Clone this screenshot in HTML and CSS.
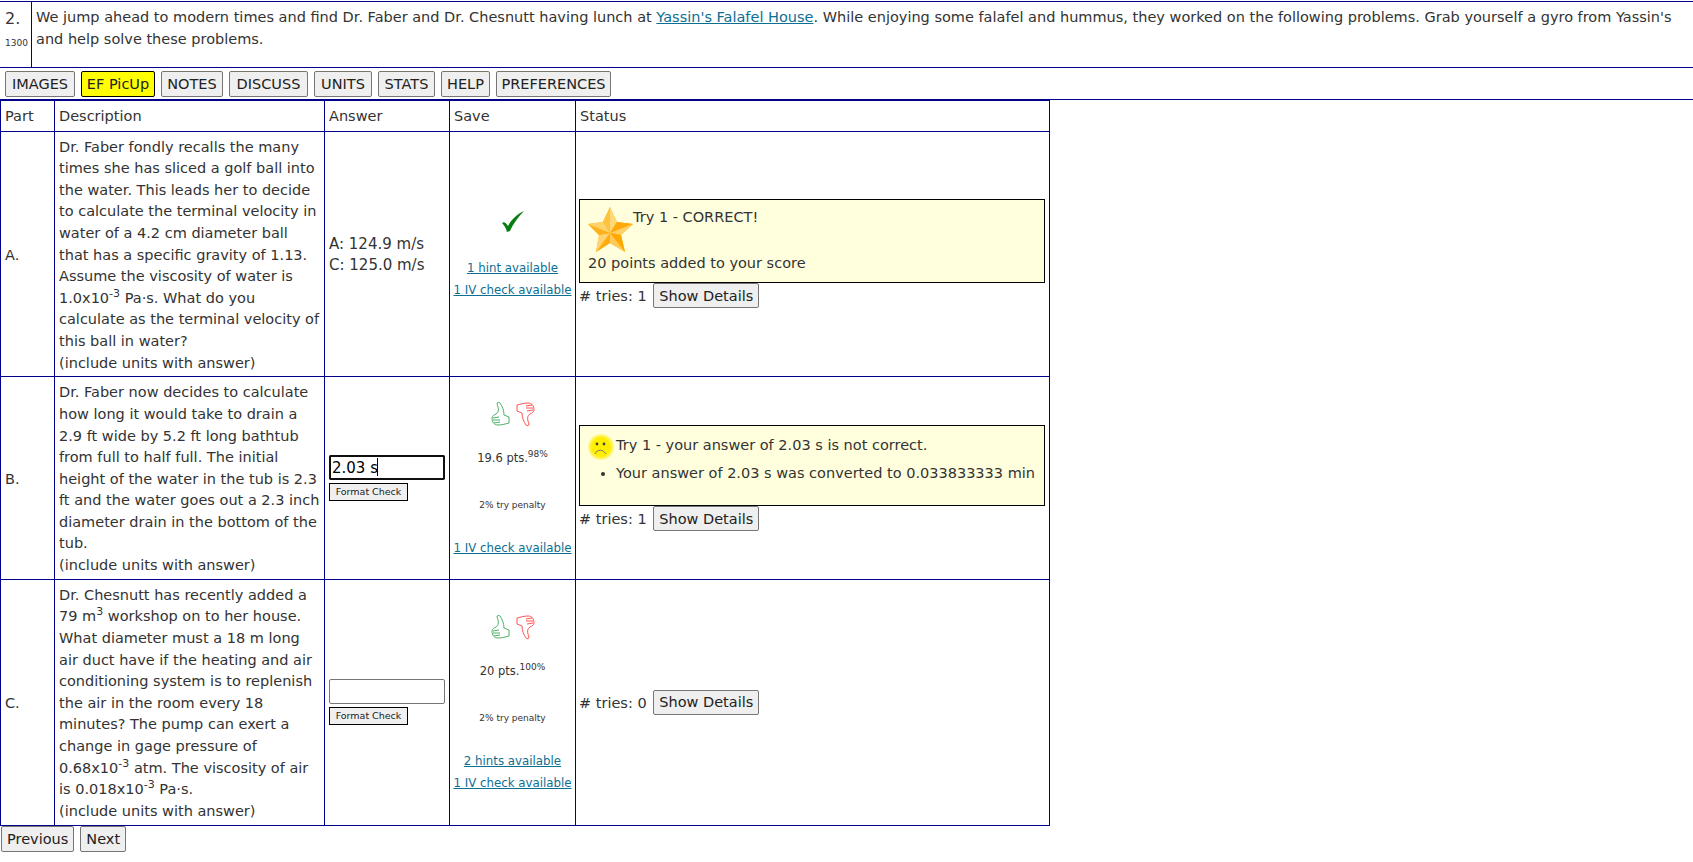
FILE: index.html
```html
<!DOCTYPE html>
<html lang="en">
<head>
<meta charset="utf-8">
<title>Problem 2</title>
<link rel="stylesheet" href="styles.css">
</head>
<body>
<div class="intro">
  <div class="num"><div class="num-big">2.</div><div class="num-small">1300</div></div>
  <div class="intro-text">We jump ahead to modern times and find Dr. Faber and Dr. Chesnutt having lunch at <a href="#">Yassin's Falafel House</a>. While enjoying some falafel and hummus, they worked on the following problems. Grab yourself a gyro from Yassin's<br>and help solve these problems.</div>
</div>
<div class="toolbar">
  <button class="btn">IMAGES</button>
  <button class="btn btn-on">EF PicUp</button>
  <button class="btn">NOTES</button>
  <button class="btn">DISCUSS</button>
  <button class="btn">UNITS</button>
  <button class="btn">STATS</button>
  <button class="btn">HELP</button>
  <button class="btn">PREFERENCES</button>
</div>
<table class="parts">
  <colgroup><col class="c1"><col class="c2"><col class="c3"><col class="c4"><col class="c5"></colgroup>
  <tr class="head"><td>Part</td><td>Description</td><td>Answer</td><td>Save</td><td>Status</td></tr>
  <tr>
    <td>A.</td>
    <td class="desc">Dr. Faber fondly recalls the many<br>times she has sliced a golf ball into<br>the water. This leads her to decide<br>to calculate the terminal velocity in<br>water of a 4.2 cm diameter ball<br>that has a specific gravity of 1.13.<br>Assume the viscosity of water is<br>1.0x10<sup>-3</sup> Pa·s. What do you<br>calculate as the terminal velocity of<br>this ball in water?<br>(include units with answer)</td>
    <td class="ans">A: 124.9 m/s<br>C: 125.0 m/s</td>
    <td class="save">
      <div class="stack">
        <svg class="check" viewBox="0 0 24 21" width="24" height="21"><path d="M1 12 C3 10 5 12 7 15 C10 9 16 3 23 0 C17 6 12 13 9 20 L6 21 C5 17 3 14 1 12Z" fill="#0a7d12"/></svg>
        <a class="lnk" href="#">1 hint available</a>
        <a class="lnk" href="#">1 IV check available</a>
      </div>
    </td>
    <td class="status">
      <div class="box box-a">
        <svg class="star" viewBox="0 0 45 46" width="45" height="46"><polygon points="22,0 29,15 45,17 33,28 37,45 22,36 8,45 11,28 0,17 15,15" fill="#ffb30f"/><polygon points="22,0 15,15 22,26" fill="#ffc23c"/><polygon points="22,0 29,15 22,26" fill="#ffd878"/><polygon points="45,17 29,15 22,26" fill="#ffa90a"/><polygon points="45,17 33,28 22,26" fill="#ffd067"/><polygon points="37,45 33,28 22,26" fill="#ffa800"/><polygon points="37,45 22,36 22,26" fill="#ffc95a"/><polygon points="8,45 22,36 22,26" fill="#ffad0c"/><polygon points="8,45 11,28 22,26" fill="#ffd373"/><polygon points="0,17 11,28 22,26" fill="#ffb01a"/><polygon points="0,17 15,15 22,26" fill="#ffd36b"/></svg>
        <div class="box-line1">Try 1 - CORRECT!</div>
        <div class="box-line2">20 points added to your score</div>
      </div>
      <div class="tries"># tries: 1 <button class="btn">Show Details</button></div>
    </td>
  </tr>
  <tr>
    <td>B.</td>
    <td class="desc">Dr. Faber now decides to calculate<br>how long it would take to drain a<br>2.9 ft wide by 5.2 ft long bathtub<br>from full to half full. The initial<br>height of the water in the tub is 2.3<br>ft and the water goes out a 2.3 inch<br>diameter drain in the bottom of the<br>tub.<br>(include units with answer)</td>
    <td class="ans ans-input">
      <div class="input-wrap"><input class="field field-focus" value="2.03 s" readonly><span class="caret"></span></div>
      <button class="fmt">Format Check</button>
    </td>
    <td class="save">
      <div class="stack">
        <svg class="thumbs" viewBox="0 0 44 26" width="44" height="26"><g fill="#fff" stroke-width="0.9"><path class="tu" d="M7 24 C3 24 1 21 1 17 C1 15 3 14 5 13 C8 11 8 8 6 3 C6 1 8 1 9 2 C11 5 13 9 13 14 L18 16 L18 22 C14 23 11 24 7 24Z M2 17 L8 16 M2 19 L9 19 M3 22 L9 21"/><path class="td" d="M7 24 C3 24 1 21 1 17 C1 15 3 14 5 13 C8 11 8 8 6 3 C6 1 8 1 9 2 C11 5 13 9 13 14 L18 16 L18 22 C14 23 11 24 7 24Z M2 17 L8 16 M2 19 L9 19 M3 22 L9 21" transform="rotate(180 22 13)"/></g></svg>
        <div class="pts">19.6 pts.<sup>98%</sup></div>
        <div class="pen">2% try penalty</div>
        <a class="lnk lnk-after" href="#">1 IV check available</a>
      </div>
    </td>
    <td class="status">
      <div class="box box-b">
        <svg class="sad" viewBox="0 0 26 26" width="26" height="26"><defs><radialGradient id="sadg" cx="50%" cy="50%" r="50%"><stop offset="70%" stop-color="#ffee00"/><stop offset="100%" stop-color="#fff8a0"/></radialGradient></defs><circle cx="13" cy="13" r="13" fill="url(#sadg)"/><circle cx="9" cy="10" r="1.4" fill="#444"/><circle cx="16" cy="10" r="1.4" fill="#444"/><path d="M7 20 C9 15 15 15 18 20" fill="none" stroke="#777" stroke-width="1"/></svg>
        <div class="box-line1 box-line1-b">Try 1 - your answer of 2.03 s is not correct.</div>
        <ul class="notes"><li>Your answer of 2.03 s was converted to 0.033833333 min</li></ul>
      </div>
      <div class="tries"># tries: 1 <button class="btn">Show Details</button></div>
    </td>
  </tr>
  <tr>
    <td>C.</td>
    <td class="desc">Dr. Chesnutt has recently added a<br>79 m<sup>3</sup> workshop on to her house.<br>What diameter must a 18 m long<br>air duct have if the heating and air<br>conditioning system is to replenish<br>the air in the room every 18<br>minutes? The pump can exert a<br>change in gage pressure of<br>0.68x10<sup>-3</sup> atm. The viscosity of air<br>is 0.018x10<sup>-3</sup> Pa·s.<br>(include units with answer)</td>
    <td class="ans ans-input">
      <div class="input-wrap"><input class="field" value="" readonly></div>
      <button class="fmt">Format Check</button>
    </td>
    <td class="save">
      <div class="stack">
        <svg class="thumbs" viewBox="0 0 44 26" width="44" height="26"><g fill="#fff" stroke-width="0.9"><path class="tu" d="M7 24 C3 24 1 21 1 17 C1 15 3 14 5 13 C8 11 8 8 6 3 C6 1 8 1 9 2 C11 5 13 9 13 14 L18 16 L18 22 C14 23 11 24 7 24Z M2 17 L8 16 M2 19 L9 19 M3 22 L9 21"/><path class="td" d="M7 24 C3 24 1 21 1 17 C1 15 3 14 5 13 C8 11 8 8 6 3 C6 1 8 1 9 2 C11 5 13 9 13 14 L18 16 L18 22 C14 23 11 24 7 24Z M2 17 L8 16 M2 19 L9 19 M3 22 L9 21" transform="rotate(180 22 13)"/></g></svg>
        <div class="pts">20 pts.<sup>100%</sup></div>
        <div class="pen">2% try penalty</div>
        <a class="lnk lnk-after" href="#">2 hints available</a>
        <a class="lnk" href="#">1 IV check available</a>
      </div>
    </td>
    <td class="status">
      <div class="tries"># tries: 0 <button class="btn">Show Details</button></div>
    </td>
  </tr>
</table>
<div class="pager">
  <button class="btn">Previous</button>
  <button class="btn">Next</button>
</div>
</body>
</html>
```

FILE: styles.css
```css
html, body { margin: 0; padding: 0; background: #fff; }
body {
  font-family: "DejaVu Sans", Verdana, sans-serif;
  font-size: 14.5px;
  line-height: 21.6px;
  color: #333;
}
a { color: #0d6f92; }
.intro {
  display: flex;
  margin-top: 1px;
  height: 65px;
  border-top: 1px solid #00008b;
  border-bottom: 1px solid #00008b;
}
.num {
  padding-left: 5px;
  width: 26px;
  flex: none;
  border-right: 1px solid #00008b;
  border-left: 1px solid #00008b;
  margin-left: -1px;
}
.num-big { font-size: 16px; line-height: 20px; margin-top: 7px; }
.num-small { font-size: 9px; line-height: 12px; margin-top: 8px; }
.intro-text { padding: 5px 0 0 4px; white-space: nowrap; }
.toolbar {
  display: flex;
  gap: 6px;
  height: 32px;
  box-sizing: border-box;
  padding: 3px 0 0 5px;
  border-bottom: 1px solid #00008b;
}
.btn {
  font-family: inherit;
  font-size: 14.5px;
  line-height: 20px;
  height: 26px;
  padding: 0 5px;
  margin: 0;
  background: #efefef;
  color: #222;
  border: 1px solid #767676;
  border-radius: 2px;
}
.toolbar .btn { padding: 0; }
.toolbar .btn:nth-child(1) { width: 70px; }
.toolbar .btn:nth-child(2) { width: 74px; }
.toolbar .btn:nth-child(3) { width: 62px; }
.toolbar .btn:nth-child(4) { width: 79px; }
.toolbar .btn:nth-child(5) { width: 58px; }
.toolbar .btn:nth-child(6) { width: 57px; }
.toolbar .btn:nth-child(7) { width: 49px; }
.toolbar .btn:nth-child(8) { width: 115px; }
.btn-on { background: #ffff00; border-color: #000; }
.parts {
  border-collapse: collapse;
  table-layout: fixed;
  width: 1049px;
  border: 1px solid #00008b;
}
.c1 { width: 54px; }
.c2 { width: 270px; }
.c3 { width: 125px; }
.c4 { width: 126px; }
.c5 { width: 474px; }
.parts td {
  border: 1px solid #00008b;
  padding: 5px 4px 2.2px;
  vertical-align: middle;
  white-space: nowrap;
}
.parts .head td { height: 21px; padding: 5px 4px 3px; }
.parts sup { font-size: 11px; line-height: 0; }
.ans { font-size: 15px; }
.parts .ans-input { padding-top: 5px; padding-bottom: 4.5px; }
.parts .save { padding-top: 7px; }
.parts .status { padding: 5px 4px 4.5px 3px; }
.stack { display: flex; flex-direction: column; align-items: center; }
.check { margin-bottom: 25px; }
.lnk { font-size: 11.8px; line-height: 22.5px; }
.lnk-after { margin-top: 25px; }
.thumbs { margin-bottom: 20px; }
.tu { stroke: #3aa655; }
.td { stroke: #ff4040; }
.parts .pts { font-size: 11.5px; line-height: 22px; }
.parts .pts sup { font-size: 9px; }
.pen { font-size: 9px; line-height: 14px; margin-top: 28.5px; }
.box {
  border: 1px solid #000;
  background: #ffffdd;
  padding: 7px 8px;
  box-sizing: border-box;
  width: 466px;
}
.box-a { height: 84px; }
.box-b { height: 81px; }
.star { float: left; }
.sad { float: left; margin: 1px 2px 0 0; }
.box-line1 { line-height: 20px; }
.box-line1-b { line-height: 22px; padding-top: 1px; }
.box-line2 { clear: left; }
.notes { margin: 7px 0 0 0; padding: 0 0 0 28px; }
.tries { line-height: 25px; }
.tries .btn { height: 25px; margin-left: 2px; }
.input-wrap { position: relative; height: 25px; }
.field {
  font-family: inherit;
  font-size: 15px;
  width: 116px;
  height: 25px;
  box-sizing: border-box;
  padding: 1px 2px;
  border: 1px solid #767676;
  border-radius: 2px;
  color: #000;
  background: #fff;
  display: block;
}
.field-focus { border: 2px solid #101010; outline: 1px solid #101010; outline-offset: -1px; padding: 1px; }
.caret {
  position: absolute;
  left: 48px;
  top: 3px;
  width: 1px;
  height: 18px;
  background: #000;
}
.fmt {
  display: block;
  margin-top: 3px;
  width: 79px;
  height: 18px;
  padding: 0;
  font-family: inherit;
  font-size: 9.5px;
  line-height: 14px;
  color: #222;
  background: #efefef;
  border: 1px solid #000;
  border-radius: 0;
}
.pager { display: flex; gap: 6px; padding-left: 1px; margin-top: 0; }
```
